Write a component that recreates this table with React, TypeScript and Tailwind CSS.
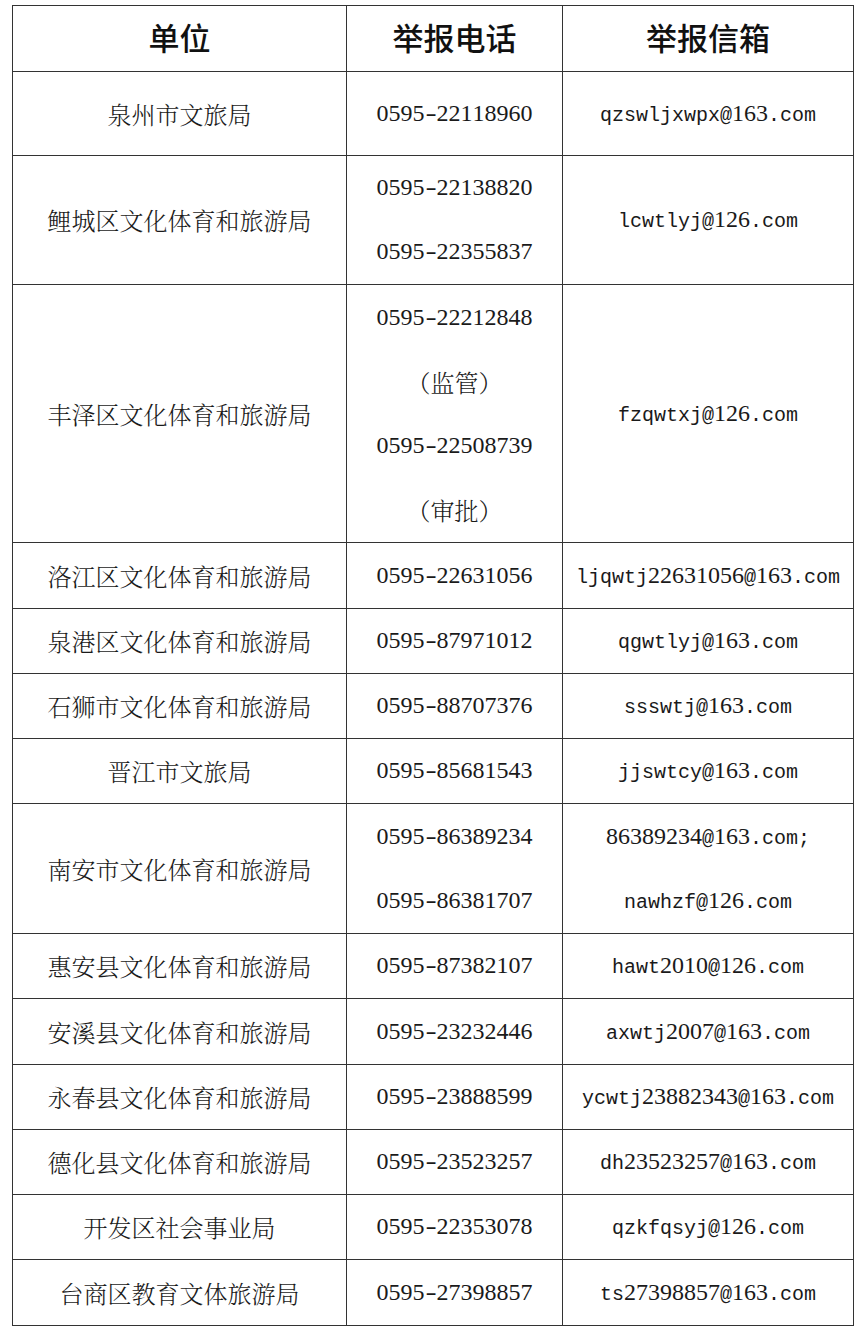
const zh = '"Noto Serif CJK SC", "Noto Sans CJK SC", sans-serif';
const serif = '"Liberation Serif", "Noto Sans CJK SC", serif';
const mono = '"Liberation Mono", monospace';

type Row = {
  unit: string;
  phones: string[];
  mails: string[];
  h: string;
};

const rows: Row[] = [
  { unit: '泉州市文旅局', phones: ['0595-22118960'], mails: ['qzswljxwpx@163.com'], h: 'h-[84px]' },
  { unit: '鲤城区文化体育和旅游局', phones: ['0595-22138820', '0595-22355837'], mails: ['lcwtlyj@126.com'], h: 'h-[129px]' },
  { unit: '丰泽区文化体育和旅游局', phones: ['0595-22212848', '（监管）', '0595-22508739', '（审批）'], mails: ['fzqwtxj@126.com'], h: 'h-[258px]' },
  { unit: '洛江区文化体育和旅游局', phones: ['0595-22631056'], mails: ['ljqwtj22631056@163.com'], h: 'h-[66px]' },
  { unit: '泉港区文化体育和旅游局', phones: ['0595-87971012'], mails: ['qgwtlyj@163.com'], h: 'h-[65px]' },
  { unit: '石狮市文化体育和旅游局', phones: ['0595-88707376'], mails: ['ssswtj@163.com'], h: 'h-[65px]' },
  { unit: '晋江市文旅局', phones: ['0595-85681543'], mails: ['jjswtcy@163.com'], h: 'h-[65px]' },
  { unit: '南安市文化体育和旅游局', phones: ['0595-86389234', '0595-86381707'], mails: ['86389234@163.com;', 'nawhzf@126.com'], h: 'h-[130px]' },
  { unit: '惠安县文化体育和旅游局', phones: ['0595-87382107'], mails: ['hawt2010@126.com'], h: 'h-[65px]' },
  { unit: '安溪县文化体育和旅游局', phones: ['0595-23232446'], mails: ['axwtj2007@163.com'], h: 'h-[66px]' },
  { unit: '永春县文化体育和旅游局', phones: ['0595-23888599'], mails: ['ycwtj23882343@163.com'], h: 'h-[65px]' },
  { unit: '德化县文化体育和旅游局', phones: ['0595-23523257'], mails: ['dh23523257@163.com'], h: 'h-[65px]' },
  { unit: '开发区社会事业局', phones: ['0595-22353078'], mails: ['qzkfqsyj@126.com'], h: 'h-[65px]' },
  { unit: '台商区教育文体旅游局', phones: ['0595-27398857'], mails: ['ts27398857@163.com'], h: 'h-[66px]' },
];

// the source sets half-width latin in fixed 12px cells
function Cell({ c }: { c: string }) {
  const digit = /[0-9]/.test(c);
  if (digit || c === '-') {
    return (
      <span
        className={`inline-block w-[12px] text-center text-[24px] ${c === '-' ? 'scale-x-[1.4]' : ''}`}
        style={{ fontFamily: serif }}
      >
        {c}
      </span>
    );
  }
  return (
    <span className="inline-block w-[12px] text-center text-[20px]" style={{ fontFamily: mono }}>
      {c}
    </span>
  );
}

function Line({ text }: { text: string }) {
  if (text.startsWith('（')) {
    return (
      <div className="h-[64px] leading-[64px] text-[24px] font-light text-[#1a1a1a]" style={{ fontFamily: zh }}>
        {text}
      </div>
    );
  }
  return (
    <div className="flex h-[64px] items-baseline justify-center pt-[19px] leading-[24px] text-[#1a1a1a]">
      {[...text].map((c, i) => (
        <Cell key={i} c={c} />
      ))}
    </div>
  );
}

export default function App() {
  return (
    <div className="min-h-[1328px] w-[865px] bg-white pl-[12px] pt-[5px]">
      <table className="w-[841px] table-fixed border-collapse">
        <colgroup>
          <col className="w-[334px]" />
          <col className="w-[216px]" />
          <col className="w-[291px]" />
        </colgroup>
        <thead>
          <tr className="h-[66px]">
            {['单位', '举报电话', '举报信箱'].map((t) => (
              <th
                key={t}
                className="border border-[#333] p-0 pb-[3px] text-center align-middle text-[31px] font-medium text-[#111]"
                style={{ fontFamily: '"Noto Sans CJK SC", sans-serif' }}
              >
                {t}
              </th>
            ))}
          </tr>
        </thead>
        <tbody>
          {rows.map((r) => (
            <tr key={r.unit} className={r.h}>
              <td
                className="border border-[#333] p-0 text-center align-middle text-[24px] font-light text-[#1a1a1a]"
                style={{ fontFamily: zh }}
              >
                {r.unit}
              </td>
              <td className="border border-[#333] p-0 text-center align-middle">
                {r.phones.map((p) => (
                  <Line key={p} text={p} />
                ))}
              </td>
              <td className="border border-[#333] p-0 text-center align-middle">
                {r.mails.map((m) => (
                  <Line key={m} text={m} />
                ))}
              </td>
            </tr>
          ))}
        </tbody>
      </table>
    </div>
  );
}
